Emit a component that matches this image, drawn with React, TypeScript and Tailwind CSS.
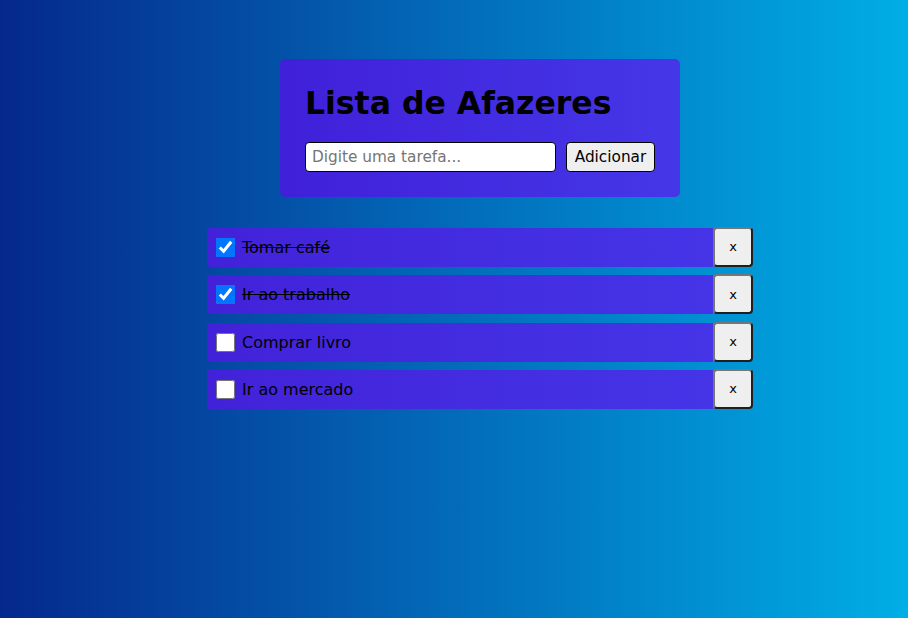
import React, { useState } from "react";

type Task = { id: number; text: string; done: boolean };

export default function App() {
  const [tasks, setTasks] = useState<Task[]>([
    { id: 1, text: "Tomar café", done: true },
    { id: 2, text: "Ir ao trabalho", done: true },
    { id: 3, text: "Comprar livro", done: false },
    { id: 4, text: "Ir ao mercado", done: false },
  ]);
  const [value, setValue] = useState("");

  const toggle = (id: number) =>
    setTasks((t) => t.map((x) => (x.id === id ? { ...x, done: !x.done } : x)));
  const remove = (id: number) => setTasks((t) => t.filter((x) => x.id !== id));
  const add = () => {
    if (!value.trim()) return;
    setTasks((t) => [...t, { id: Date.now(), text: value.trim(), done: false }]);
    setValue("");
  };

  return (
    <div
      className="min-h-[618px] w-full bg-[linear-gradient(to_right,#05288c,#00aee6)] flex flex-col items-center pl-[52px] pt-[59px] text-black"
      style={{ fontFamily: '"DejaVu Sans", Verdana, sans-serif' }}
    >
      <div className="w-[400px] rounded-[5px] bg-[linear-gradient(to_right,#4020d9,#4537e8)] px-[25px] pt-[26px] pb-[25px]">
        <h1 className="text-[31.5px] leading-[37px] font-bold mb-[20px] text-black">Lista de Afazeres</h1>
        <div className="flex gap-[10px]">
          <input
            value={value}
            onChange={(e) => setValue(e.target.value)}
            placeholder="Digite uma tarefa..."
            className="w-[251px] h-[30px] bg-white border border-black rounded-[4px] px-[6px] text-[15.3px] text-black placeholder:text-[#757575] outline-none"
          />
          <button
            onClick={add}
            className="w-[89px] h-[30px] bg-[#efefef] border border-black rounded-[4px] text-[15.3px] text-black"
          >
            Adicionar
          </button>
        </div>
      </div>

      <ul className="mt-[30px] w-[546px] flex flex-col gap-[7.33px]">
        {tasks.map((t) => (
          <li key={t.id} className="flex items-center h-[40px]">
            <div className="flex-1 h-[39px] mt-[1px] rounded-l-[3px] bg-[linear-gradient(to_right,#4222d9,#4535e7)] flex items-center pl-[9px] gap-[7px]">
              <input
                type="checkbox"
                checked={t.done}
                onChange={() => toggle(t.id)}
                className="w-[19px] h-[19px] m-0"
              />
              <span className={"text-[16px] text-black mt-[1px] " + (t.done ? "line-through" : "")}>{t.text}</span>
            </div>
            <button
              onClick={() => remove(t.id)}
              className="w-[40px] h-[40px] bg-[#efefef] rounded-[4px] border-2 border-t-[#767676] border-l-[#767676] border-b-[#1f1f1f] border-r-[#1f1f1f] text-[13px] text-black"
            >
              x
            </button>
          </li>
        ))}
      </ul>
    </div>
  );
}
